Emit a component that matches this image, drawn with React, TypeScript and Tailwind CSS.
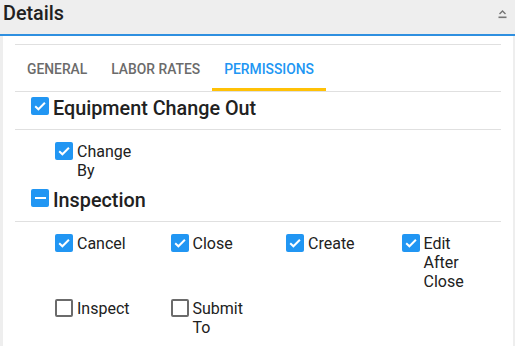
import React from 'react';

const font = { fontFamily: 'Roboto, "Liberation Sans", sans-serif' };

function Box({ state }: { state: 'on' | 'off' | 'mixed' }) {
  if (state === 'off') {
    return <span className="block h-[18px] w-[18px] shrink-0 rounded-[2px] border-2 border-[#6b6b6b] bg-white" />;
  }
  return (
    <span className="flex h-[18px] w-[18px] shrink-0 items-center justify-center rounded-[2px] bg-[#2196f3]">
      {state === 'on' ? (
        <svg width="14" height="14" viewBox="0 0 14 14">
          <path d="M2.2 7.2 L5.4 10.3 L11.9 3.8" fill="none" stroke="white" strokeWidth="2" />
        </svg>
      ) : (
        <span className="block h-[2px] w-[11px] bg-white" />
      )}
    </span>
  );
}

function Item({ label, state = 'on' }: { label: string; state?: 'on' | 'off' }) {
  return (
    <div className="flex items-start gap-[4px] pl-4">
      <Box state={state} />
      <span className="max-w-[62px] text-[16px] leading-[19px] text-[#212121]">{label}</span>
    </div>
  );
}

function Heading({ label, state }: { label: string; state: 'on' | 'mixed' }) {
  return (
    <div className="flex items-start gap-[4px] border-b border-[#e0e0e0] pb-[8px] pl-4">
      <Box state={state} />
      <span className="text-[19.8px] font-medium leading-[24px] text-[#212121]">{label}</span>
    </div>
  );
}

export default function App() {
  return (
    <div className="h-[346px] w-[515px] overflow-hidden bg-[#eeeeee]" style={font}>
      {/* Header */}
      <div className="flex h-[36px] items-start justify-between border-b-2 border-[#2e8fe0] pl-[3px] pr-[8px] pt-[2px]">
        <span className="text-[19.8px] font-medium leading-[24px] text-[#212121]">Details</span>
        <svg width="9" height="12" viewBox="0 0 9 12" className="mt-[7px]">
          <path d="M1.5 5 L4.5 2 L7.5 5" fill="none" stroke="#757575" strokeWidth="1.4" />
          <rect x="0.5" y="7.5" width="8" height="1.6" fill="#757575" />
        </svg>
      </div>

      {/* Panel */}
      <div className="ml-[3px] mr-[2px] h-full bg-white px-[12px] pt-[8px]">
        <div className="flex border-y border-[#e0e0e0]">
          <div className="h-[46px] px-3 pt-[14px] text-[13.85px] font-medium leading-[20px] text-[#6b6b6b]">GENERAL</div>
          <div className="h-[46px] px-3 pt-[14px] text-[13.85px] font-medium leading-[20px] text-[#6b6b6b]">LABOR RATES</div>
          <div className="h-[46px] border-b-[3px] border-[#ffc107] px-3 pt-[14px] text-[13.85px] font-medium leading-[20px] text-[#2196f3]">
            PERMISSIONS
          </div>
        </div>

        <div className="pt-[5px]">
          <Heading label="Equipment Change Out" state="on" />
          <div className="pb-[9px] pl-[24px] pt-[12px]">
            <Item label="Change By" />
          </div>
          <Heading label="Inspection" state="mixed" />
          <div className="grid grid-cols-4 gap-y-[8px] pl-[24px] pt-[12px]">
            <Item label="Cancel" />
            <Item label="Close" />
            <Item label="Create" />
            <Item label="Edit After Close" />
            <Item label="Inspect" state="off" />
            <Item label="Submit To" state="off" />
          </div>
        </div>
      </div>
    </div>
  );
}
